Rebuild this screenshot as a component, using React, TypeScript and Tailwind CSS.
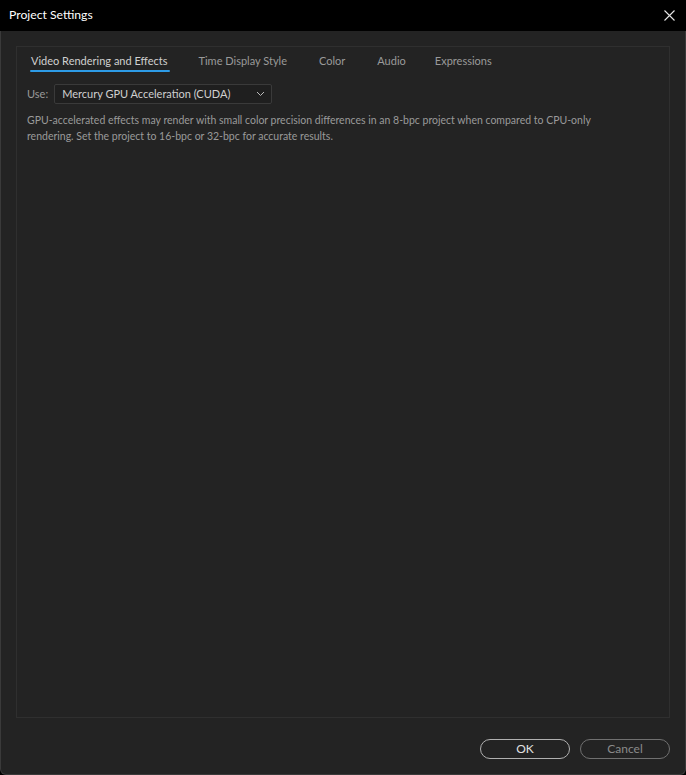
import React from "react";

export default function App() {
  const tabs = ["Video Rendering and Effects", "Time Display Style", "Color", "Audio", "Expressions"];
  return (
    <div className="w-[686px] h-[775px] bg-black flex flex-col" style={{ fontFamily: "Lato, 'Noto Sans', sans-serif" }}>
      <div className="h-[31px] shrink-0 flex items-center justify-between pl-[9px] pr-[11px]">
        <span className="text-white text-[12.2px] leading-none">Project Settings</span>
        <svg width="11" height="11" viewBox="0 0 11 11">
          <path d="M0.5 0.5 L10.5 10.5 M10.5 0.5 L0.5 10.5" stroke="#e6e6e6" strokeWidth="1.1" />
        </svg>
      </div>
      <div className="flex-1 bg-[#232323] border-x border-b border-[#3a3a3a] rounded-b-[6px] flex flex-col px-[15px] pt-[15px] pb-[15px]">
        <div className="flex-1 border border-[#2f2f2f] flex flex-col pl-[10px] pr-[10px]">
          <div className="flex gap-[32px] pl-[4px] pt-[7px]">
            {tabs.map((t, i) => (
              <div key={t} className={`flex flex-col ${i === 0 ? "-mr-[1px]" : ""} ${i === 4 ? "-ml-[3px]" : ""}`}>
                <span className={`text-[11px] h-[14px] leading-[14px] whitespace-nowrap ${i === 0 ? "text-[#d0d0d0]" : "text-[#9a9a9a]"}`}>{t}</span>
                <div className={`mt-[2px] h-[2px] -ml-[1px] -mr-[2px] rounded-full ${i === 0 ? "bg-[#2d9be6]" : "bg-transparent"}`} />
              </div>
            ))}
          </div>
          <div className="flex items-center mt-[12px] h-[20px]">
            <span className="text-[11px] text-[#9a9a9a] mr-[6px]">Use:</span>
            <div className="w-[218px] h-[20px] border border-[#3a3a3a] bg-[#1f1f1f] rounded-[2px] flex items-center justify-between pl-[7px] pr-[6px]">
              <span className="text-[11px] text-[#d0d0d0]">Mercury GPU Acceleration (CUDA)</span>
              <svg width="9" height="6" viewBox="0 0 9 6">
                <path d="M1 1 L4.5 4.5 L8 1" stroke="#bbbbbb" strokeWidth="1" fill="none" />
              </svg>
            </div>
          </div>
          <p className="mt-[8px] text-[10.5px] leading-[16px] text-[#9a9a9a] w-[600px]">
            GPU-accelerated effects may render with small color precision differences in an 8-bpc project when compared to CPU-only rendering. Set the project to 16-bpc or 32-bpc for accurate results.
          </p>
        </div>
        <div className="flex justify-end gap-[10px] mt-[21px]">
          <button className="w-[90px] h-[20px] rounded-full border border-[#b0b0b0] text-[12px] text-[#e0e0e0] leading-none">OK</button>
          <button className="w-[90px] h-[20px] rounded-full border border-[#707070] text-[12px] text-[#8a8a8a] leading-none">Cancel</button>
        </div>
      </div>
    </div>
  );
}
